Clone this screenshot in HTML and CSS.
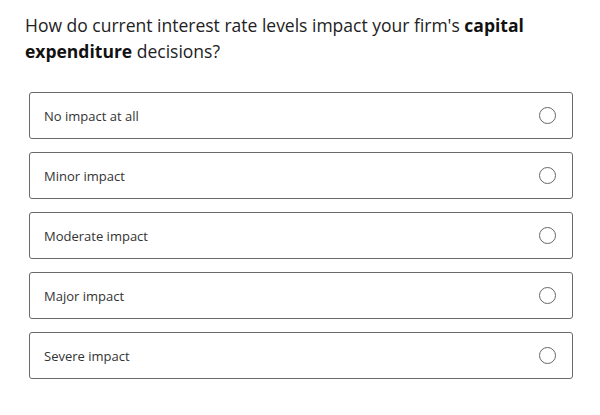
FILE: index.html
```html
<!DOCTYPE html>
<html>
<head>
<meta charset="utf-8">
<link rel="stylesheet" href="styles.css">
</head>
<body>
<div class="survey">
  <h1 class="question">How do current interest rate levels impact your firm's <b>capital expenditure</b> decisions?</h1>
  <div class="options">
    <label class="option"><span class="label">No impact at all</span><span class="radio"></span></label>
    <label class="option"><span class="label">Minor impact</span><span class="radio"></span></label>
    <label class="option"><span class="label">Moderate impact</span><span class="radio"></span></label>
    <label class="option"><span class="label">Major impact</span><span class="radio"></span></label>
    <label class="option"><span class="label">Severe impact</span><span class="radio"></span></label>
  </div>
</div>
</body>
</html>
```
FILE: styles.css
```css
html, body {
  margin: 0;
  padding: 0;
  background: #fff;
}
body {
  font-family: "Open Sans", "Liberation Sans", sans-serif;
  color: #222;
}
.survey {
  padding: 12px 27px 0 25px;
}
.question {
  margin: 0;
  font-size: 17.5px;
  font-weight: 400;
  line-height: 26px;
  color: #222;
}
.question b {
  font-weight: 700;
  color: #111;
}
.options {
  margin-top: 28px;
  margin-left: 4px;
  display: flex;
  flex-direction: column;
  gap: 13px;
}
.option {
  box-sizing: border-box;
  height: 47px;
  border: 1.5px solid #6a6a6a;
  border-radius: 3px;
  display: flex;
  align-items: center;
  justify-content: space-between;
  padding: 0 16px 0 14px;
}
.label {
  font-size: 13px;
  color: #333;
}
.radio {
  box-sizing: border-box;
  width: 17px;
  height: 17px;
  border: 1.5px solid #666;
  border-radius: 50%;
}
```
